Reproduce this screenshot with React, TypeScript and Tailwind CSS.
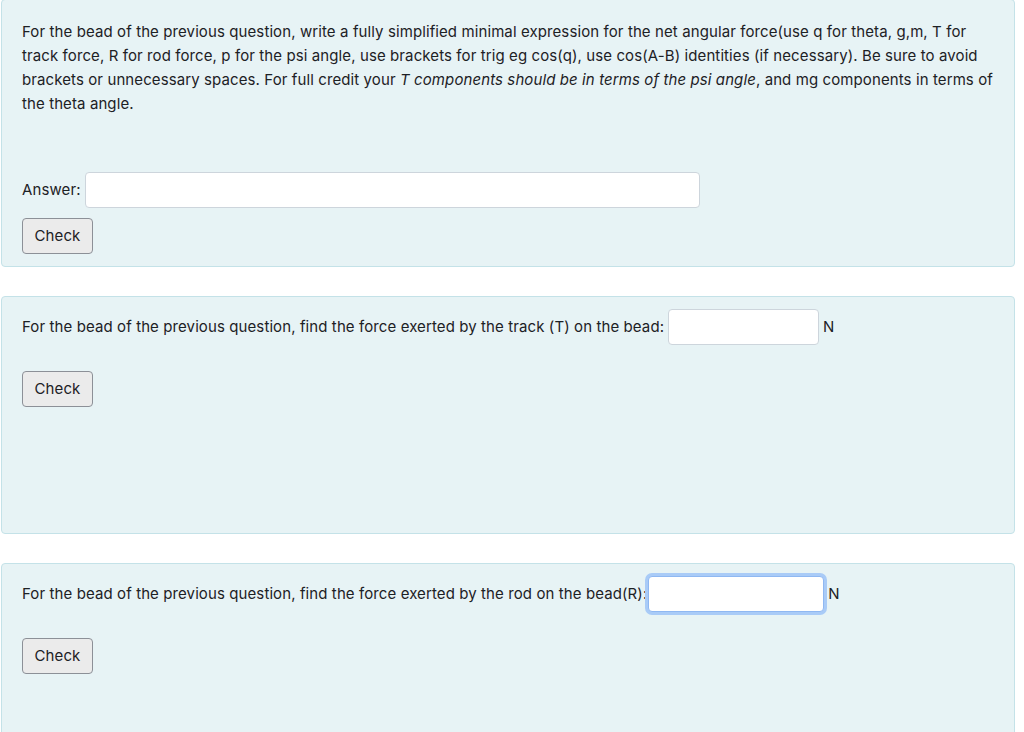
import React from "react";

const font = { fontFamily: "Inter, 'Noto Sans', 'Liberation Sans', sans-serif" };

function CheckButton() {
  return (
    <button
      type="button"
      className="h-[36px] w-[71px] rounded-[4px] border border-[#8c9097] bg-[#ebebeb] text-[15px] text-[#1d2125]"
    >
      Check
    </button>
  );
}

export default function App() {
  return (
    <div className="min-h-[732px] bg-white text-[15px] leading-[24px] tracking-[0.1px] text-[#1d2125]" style={font}>
      <div className="ml-[1px] flex w-[1014px] flex-col gap-[29px]">
        {/* Card 1 */}
        <div className="-mt-[1px] rounded-[4px] border border-[#c4e2e8] bg-[#e7f3f5] pl-[20px] pr-[14px] pt-[20px] pb-[12px]">
          <p>
            For the bead of the previous question, write a fully simplified minimal expression for the net angular
            force(use q for theta, g,m, T for track force, R for rod force, p for the psi angle, use brackets for trig eg
            cos(q), use cos(A-B) identities (if necessary). Be sure to avoid brackets or unnecessary spaces. For full
            credit your <i>T components should be in terms of the psi angle</i>, and mg components in terms of the theta
            angle.
          </p>
          <div className="mt-[56px] flex items-center gap-[4px]">
            <span>Answer:</span>
            <input
              type="text"
              className="h-[36px] w-[615px] rounded-[4px] border border-[#cdd5dc] bg-white px-2 outline-none"
            />
          </div>
          <div className="mt-[10px]">
            <CheckButton />
          </div>
        </div>

        {/* Card 2 */}
        <div className="h-[238px] rounded-[4px] border border-[#c4e2e8] bg-[#e7f3f5] px-[20px] pt-[12px]">
          <div className="flex items-center">
            <span>For the bead of the previous question, find the force exerted by the track (T) on the bead:</span>
            <input
              type="text"
              className="ml-[4px] h-[36px] w-[151px] rounded-[4px] border border-[#cdd5dc] bg-white px-2 outline-none"
            />
            <span className="ml-[4px]">N</span>
          </div>
          <div className="mt-[26px]">
            <CheckButton />
          </div>
        </div>

        {/* Card 3 */}
        <div className="h-[238px] rounded-[4px] border border-[#c4e2e8] bg-[#e7f3f5] px-[20px] pt-[12px]">
          <div className="flex items-center">
            <span>For the bead of the previous question, find the force exerted by the rod on the bead(R):</span>
            <input
              type="text"
              className="ml-[1px] h-[36px] w-[176px] rounded-[4px] border border-[#8fb8f2] bg-white px-2 shadow-[0_0_0_3px_#a9cbf7] outline-none"
            />
            <span className="ml-[4px]">N</span>
          </div>
          <div className="mt-[26px]">
            <CheckButton />
          </div>
        </div>
      </div>
    </div>
  );
}
